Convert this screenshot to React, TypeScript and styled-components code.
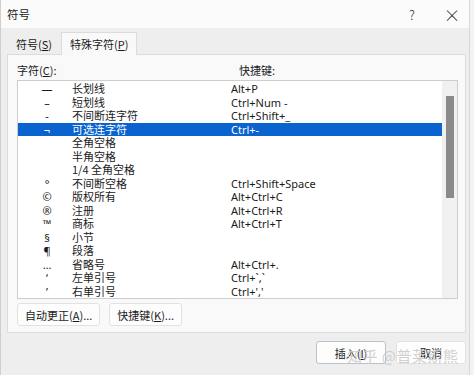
import React from "react";
import styled, { createGlobalStyle } from "styled-components";

const GlobalStyle = createGlobalStyle`
  html, body {
    margin: 0;
    padding: 0;
    background: #f3f3f3;
  }
  body {
    font-family: "Noto Sans", "Noto Sans CJK SC", sans-serif;
    font-size: 11px;
    color: #1a1a1a;
  }
`;

const Window = styled.div`
  position: relative;
  width: 470px;
  height: 375px;
  background: #eeeeee;
  border-left: 1px solid #cfcfcf;
  border-right: 1px solid #d8d8d8;
  display: flex;
  flex-direction: column;
  box-sizing: border-box;
  overflow: hidden;
`;

const TitleBar = styled.div`
  height: 28px;
  background: #fbfbfb;
  display: flex;
  align-items: center;
  padding: 0 0 0 6px;
  font-family: "Noto Sans CJK SC", sans-serif;
  font-size: 11.5px;
`;

const Title = styled.span`
  flex: 1;
`;

const TitleButton = styled.span<{ wide?: boolean }>`
  width: 34px;
  margin-left: ${(p) => (p.wide ? "6px" : "0")};
  text-align: center;
  font-size: ${(p) => (p.wide ? "17px" : "13px")};
  font-weight: 300;
  color: #333;
`;

const Body = styled.div`
  flex: 1;
  padding: 5px 3px 0 6px;
  display: flex;
  flex-direction: column;
`;

const Tabs = styled.div`
  display: flex;
  height: 21px;
  align-items: flex-end;
`;

const Tab = styled.div<{ active?: boolean }>`
  height: ${(p) => (p.active ? "22px" : "20px")};
  padding: 0 8px;
  display: flex;
  align-items: center;
  font-family: "Noto Sans CJK SC", sans-serif;
  font-size: 11px;
  background: ${(p) => (p.active ? "#f9f9f9" : "transparent")};
  border: 1px solid ${(p) => (p.active ? "#dcdcdc" : "transparent")};
  border-bottom: none;
  margin-bottom: ${(p) => (p.active ? "-1px" : "0")};
  position: relative;
  z-index: 1;
  u {
    text-decoration: underline;
  }
`;

const Panel = styled.div`
  background: #f9f9f9;
  border: 1px solid #dcdcdc;
  height: 279px;
  box-sizing: border-box;
  padding: 6px 7px 0 9px;
  display: flex;
  flex-direction: column;
`;

const Labels = styled.div`
  display: grid;
  grid-template-columns: 222px 1fr;
  font-family: "Noto Sans CJK SC", sans-serif;
  font-size: 11px;
  height: 18px;
  line-height: 18px;
`;

const ListBox = styled.div`
  margin-top: 1px;
  height: 219px;
  background: #ffffff;
  border: 1px solid #cdcdcd;
  display: flex;
  box-sizing: border-box;
  overflow: hidden;
`;

const Rows = styled.div`
  flex: 1;
  padding-top: 1px;
`;

const Row = styled.div<{ selected?: boolean }>`
  height: 13.5px;
  line-height: 13.5px;
  display: grid;
  grid-template-columns: 54px 159px 1fr;
  background: ${(p) => (p.selected ? "#0a63cf" : "transparent")};
  color: ${(p) => (p.selected ? "#ffffff" : "#1a1a1a")};
  white-space: nowrap;
`;

const Sym = styled.span`
  text-align: center;
  padding-left: 4px;
  font-size: 11px;
  font-family: "Noto Sans", "DejaVu Sans", sans-serif;
`;

const Name = styled.span`
  font-family: "Noto Sans CJK SC", sans-serif;
  font-size: 11px;
`;

const Keys = styled.span`
  font-family: "Noto Sans", "Open Sans", sans-serif;
  font-size: 11px;
`;

const ScrollTrack = styled.div`
  width: 15px;
  background: #f0f0f0;
  display: flex;
  flex-direction: column;
  align-items: center;
  padding-top: 15px;
`;

const ScrollThumb = styled.div`
  width: 8px;
  height: 102px;
  background: #8a8a8a;
`;

const ButtonRow = styled.div`
  display: flex;
  gap: 9px;
  margin-top: 4px;
`;

const Button = styled.button<{ primary?: boolean }>`
  height: 23px;
  padding: 0 7px;
  min-width: 70px;
  background: #fdfdfd;
  border: 1px solid ${(p) => (p.primary ? "#b7c3cf" : "#e2e2e2")};
  border-radius: 3px;
  font-family: "Noto Sans CJK SC", sans-serif;
  font-size: 11px;
  color: #1a1a1a;
  u {
    text-decoration: underline;
  }
`;

const Footer = styled.div`
  display: flex;
  justify-content: flex-end;
  gap: 10px;
  padding: 8px 0 0 0;
`;

const Watermark = styled.span`
  position: absolute;
  left: 346px;
  top: 345px;
  font-family: "Noto Sans CJK SC", sans-serif;
  font-size: 15px;
  color: rgba(200, 200, 200, 0.85);
  pointer-events: none;
  letter-spacing: 0.5px;
`;

type Item = { sym: string; name: string; keys: string };

const items: Item[] = [
  { sym: "—", name: "长划线", keys: "Alt+P" },
  { sym: "–", name: "短划线", keys: "Ctrl+Num -" },
  { sym: "-", name: "不间断连字符", keys: "Ctrl+Shift+_" },
  { sym: "¬", name: "可选连字符", keys: "Ctrl+-" },
  { sym: "", name: "全角空格", keys: "" },
  { sym: "", name: "半角空格", keys: "" },
  { sym: "", name: "1/4 全角空格", keys: "" },
  { sym: "°", name: "不间断空格", keys: "Ctrl+Shift+Space" },
  { sym: "©", name: "版权所有", keys: "Alt+Ctrl+C" },
  { sym: "®", name: "注册", keys: "Alt+Ctrl+R" },
  { sym: "™", name: "商标", keys: "Alt+Ctrl+T" },
  { sym: "§", name: "小节", keys: "" },
  { sym: "¶", name: "段落", keys: "" },
  { sym: "…", name: "省略号", keys: "Alt+Ctrl+." },
  { sym: "‘", name: "左单引号", keys: "Ctrl+`,`" },
  { sym: "’", name: "右单引号", keys: "Ctrl+','" },
];

const App = () => {
  return (
    <Window>
      <GlobalStyle />
      <TitleBar>
        <Title>符号</Title>
        <TitleButton>?</TitleButton>
        <TitleButton wide>×</TitleButton>
      </TitleBar>
      <Body>
        <Tabs>
          <Tab>
            符号(<u>S</u>)
          </Tab>
          <Tab active>
            特殊字符(<u>P</u>)
          </Tab>
        </Tabs>
        <Panel>
          <Labels>
            <span>
              字符(<u>C</u>):
            </span>
            <span>快捷键:</span>
          </Labels>
          <ListBox>
            <Rows>
              {items.map((it, i) => (
                <Row key={i} selected={i === 3}>
                  <Sym>{it.sym}</Sym>
                  <Name>{it.name}</Name>
                  <Keys>{it.keys}</Keys>
                </Row>
              ))}
            </Rows>
            <ScrollTrack>
              <ScrollThumb />
            </ScrollTrack>
          </ListBox>
          <ButtonRow>
            <Button>
              自动更正(<u>A</u>)...
            </Button>
            <Button>
              快捷键(<u>K</u>)...
            </Button>
          </ButtonRow>
        </Panel>
        <Footer>
          <Button primary>
            插入(<u>I</u>)
          </Button>
          <Button>取消</Button>
        </Footer>
      </Body>
      <Watermark>知乎 @普莱斯熊</Watermark>
    </Window>
  );
};

export default App;
